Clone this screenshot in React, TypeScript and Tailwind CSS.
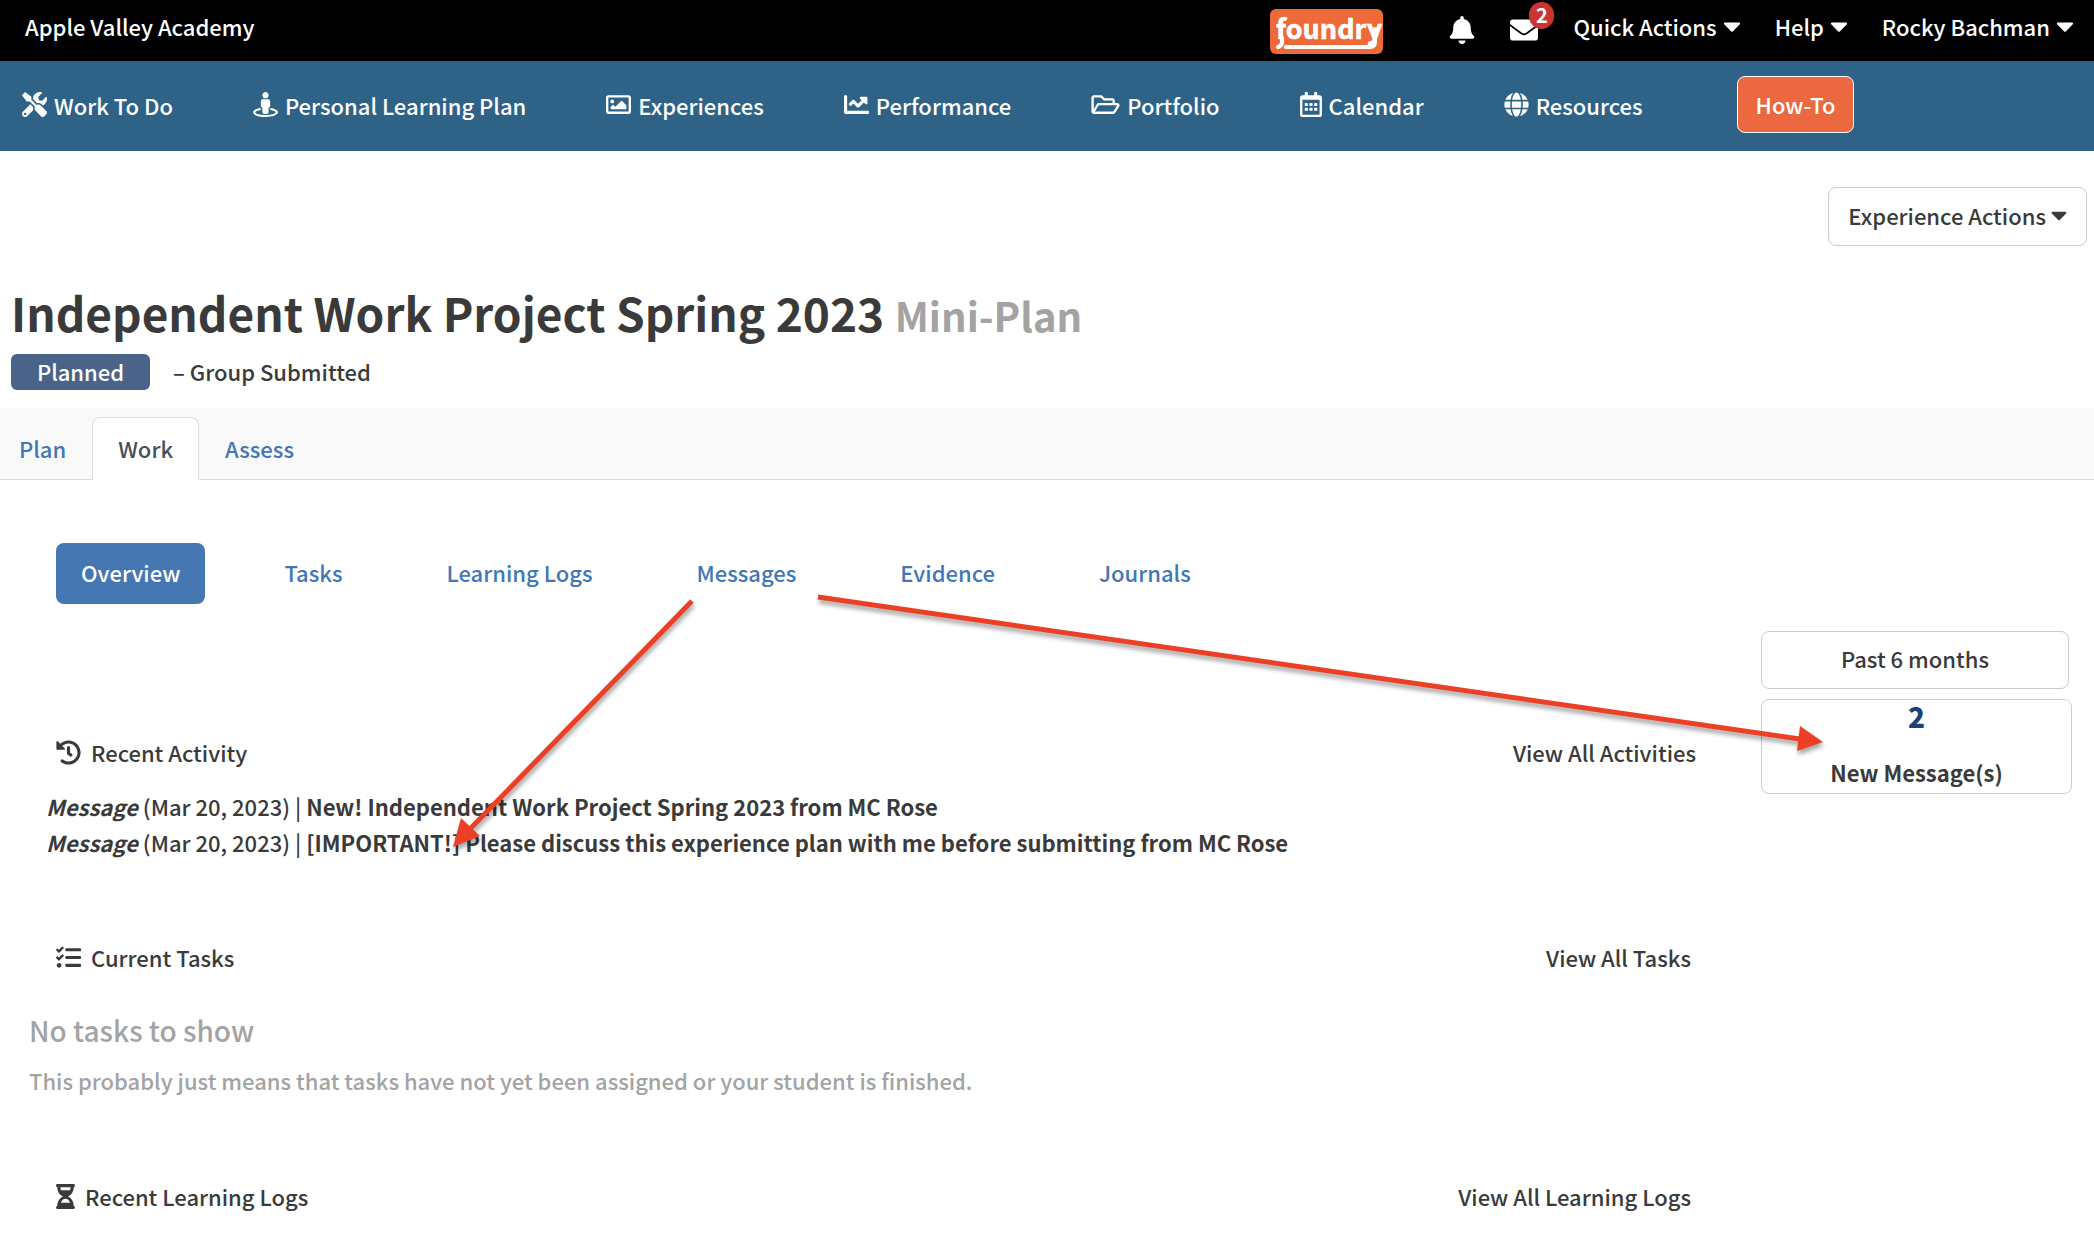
import type { ReactNode } from "react";
import {
    FaBell,
    FaCaretDown,
    FaChartLine,
    FaEnvelope,
    FaGlobe,
    FaHistory,
    FaHourglassHalf,
    FaRegCalendarAlt,
    FaRegFolderOpen,
    FaRegImage,
    FaStreetView,
    FaTasks,
    FaTools,
} from "react-icons/fa";

const navItems = [
    { label: "Work To Do", icon: <FaTools /> },
    { label: "Personal Learning Plan", icon: <FaStreetView /> },
    { label: "Experiences", icon: <FaRegImage /> },
    { label: "Performance", icon: <FaChartLine /> },
    { label: "Portfolio", icon: <FaRegFolderOpen className="w-[29px]" /> },
    { label: "Calendar", icon: <FaRegCalendarAlt className="w-[22px]" /> },
    { label: "Resources", icon: <FaGlobe /> },
]

const pills = ["Overview", "Tasks", "Learning Logs", "Messages", "Evidence", "Journals"]

const activities = [
    { date: "Mar 20, 2023", title: "New! Independent Work Project Spring 2023 from MC Rose" },
    { date: "Mar 20, 2023", title: "[IMPORTANT!] Please discuss this experience plan with me before submitting from MC Rose" },
]

function FoundryLogo(){
    return (
        <a href="#" aria-label="foundry" className="mt-[9px] block">
            <svg width="113" height="45" viewBox="0 0 113 45">
                <rect width="113" height="45" rx="6" fill="#ee6a39" />
                <text x="6" y="30" fill="#fff" stroke="#fff" strokeWidth="0.6" fontFamily="'Noto Sans CJK SC', sans-serif" fontWeight="700" fontSize="27">foundry</text>
                <path d="M12 29v4q0 4-4 5M105 20v13q0 5-5 5H16" fill="none" stroke="#fff" strokeWidth="4" strokeLinecap="round" />
            </svg>
        </a>
    )
}

function TopMenu({label}:{label:string}){
    return (
        <button className="flex items-center gap-[6px]">
            {label}
            <FaCaretDown className="h-7 w-[18px]" />
        </button>
    )
}

function SectionHeader({icon,title,link}:{
    icon:ReactNode,
    title:string,
    link:string
}){
    return (
        <div className="flex justify-between pl-14 [&_svg]:h-[25px]">
            <h3 className="flex items-center gap-[10px]">{icon}{title}</h3>
            <a href="#">{link}</a>
        </div>
    )
}

// hand drawn callouts that point from the Messages pill to its results
function Arrows(){
    return (
        <svg className="absolute left-0 top-0 pointer-events-none drop-shadow-[1px_4px_2px_rgba(0,0,0,0.35)]" width="2094" height="900" fill="#eb4026" stroke="#eb4026">
            <path d="M692 601L468 831M818 597L1800 739" strokeWidth="5" />
            <path d="M453 847L461 818L480 836ZM1823 742L1800 726L1797 751Z" stroke="none" />
        </svg>
    )
}

export default function App(){
    return (
        <div className="relative min-h-screen overflow-x-hidden bg-white pb-5 font-['Noto_Sans_CJK_SC',sans-serif] text-[22px] font-medium leading-9 text-[#3a3a3a]">
            <header className="flex h-[61px] items-start justify-between bg-black pl-[25px] pr-5 text-white">
                <div className="pt-2">Apple Valley Academy</div>
                <div className="flex items-start">
                    <FoundryLogo />
                    <button aria-label="Notifications" className="ml-[66px] mt-4"><FaBell className="h-[28px] w-[26px]" /></button>
                    <button aria-label="Messages" className="relative ml-[35px] mt-4">
                        <FaEnvelope className="size-7" />
                        <span className="absolute -right-4 -top-[14px] flex h-[27px] w-[25px] items-center justify-center rounded-full bg-[#cc3333] pb-[2px] text-[20px] font-bold">2</span>
                    </button>
                    <div className="ml-[35px] flex gap-[34px] pt-2">
                        <TopMenu label="Quick Actions" />
                        <TopMenu label="Help" />
                        <TopMenu label="Rocky Bachman" />
                    </div>
                </div>
            </header>

            <nav className="flex h-[90px] items-center gap-[80px] bg-[#2e6387] pb-[3px] pl-[22px] text-white">
                {navItems.map((item)=>{
                    return <a key={item.label} href="#" className="flex items-center gap-[7px] whitespace-nowrap [&_svg]:text-[25px]">
                        {item.icon}{item.label}
                    </a>
                })}
                <button className="ml-[14px] h-[57px] rounded-lg border border-white bg-[#eb6841] px-[18px] pb-[2px]">How-To</button>
            </nav>

            <div className="flex justify-end pr-[7px] pt-9">
                <button className="flex h-[59px] items-center gap-[5px] rounded-lg border border-[#cccccc] pl-[19px] pr-[19px] pb-1">
                    Experience Actions
                    <FaCaretDown className="h-[26px] w-4" />
                </button>
            </div>

            <h1 className="pl-[11px] pt-[33px] text-[46px] leading-[66px] font-bold">
                Independent Work Project Spring 2023 <small className="text-[40px] text-[#a3a3a3]">Mini-Plan</small>
            </h1>
            <div className="flex items-center gap-[23px] pl-[11px] pt-[6px]">
                <span className="w-[139px] rounded-md bg-[#4a6489] pb-[2px] text-center leading-[34px] text-white">Planned</span>
                <span className="pb-[2px] leading-[34px]">– Group Submitted</span>
            </div>

            <div className="mt-[18px] flex h-[72px] items-end border-b border-[#dddddd] bg-[#f9f9f9] text-[#4177b5]">
                <a href="#" className="flex h-[63px] items-center pl-[19px] pr-[26px]">Plan</a>
                <a href="#" className="-mb-px flex h-[63px] items-center rounded-t-lg border border-b-0 border-[#dddddd] bg-white px-[25px] pb-[2px] text-[#4a4f57]">Work</a>
                <a href="#" className="flex h-[63px] items-center px-[26px]">Assess</a>
            </div>

            <div className="flex gap-[54px] pl-14 pt-[63px]">
                {pills.map((pill)=>{
                    return <a key={pill} href="#" className={`${(pill === "Overview")?"bg-[#4577b2] text-white":"text-[#4177b5]"} flex h-[61px] items-center rounded-lg px-[25px] pb-1`}>{pill}</a>
                })}
            </div>

            <div className="flex items-start gap-[65px] pr-[22px] pt-[27px]">
                <main className="flex-1 pt-[103px]">
                    <SectionHeader icon={<FaHistory className="w-[25px]" />} title="Recent Activity" link="View All Activities" />
                    <ul className="pl-[46px] pt-[18px]">
                        {activities.map((activity)=>{
                            return <li key={activity.title}>
                                <b><i>Message</i></b> ({activity.date}) | <b>{activity.title}</b>
                            </li>
                        })}
                    </ul>

                    <div className="pr-[5px] pt-[79px]">
                        <SectionHeader icon={<FaTasks className="w-[25px]" />} title="Current Tasks" link="View All Tasks" />
                    </div>
                    <div className="pl-[29px] pt-[35px] text-[#a3a3a3]">
                        <h4 className="text-[28px] leading-10">No tasks to show</h4>
                        <p className="pt-3">This probably just means that tasks have not yet been assigned or your student is finished.</p>
                    </div>

                    <div className="pr-[5px] pt-20">
                        <SectionHeader icon={<FaHourglassHalf className="w-[19px]" />} title="Recent Learning Logs" link="View All Learning Logs" />
                    </div>
                </main>

                <aside className="flex w-[311px] flex-col gap-[10px]">
                    <button className="mr-[3px] h-[58px] rounded-lg border border-[#cccccc] pb-1">Past 6 months</button>
                    <div className="h-[95px] rounded-lg border border-[#cccccc] text-center font-bold">
                        <div className="text-[28px] font-black leading-8 text-[#1d4176]">2</div>
                        <div className="pt-[22px]">New Message(s)</div>
                    </div>
                </aside>
            </div>
            <Arrows />
        </div>
    )
}
